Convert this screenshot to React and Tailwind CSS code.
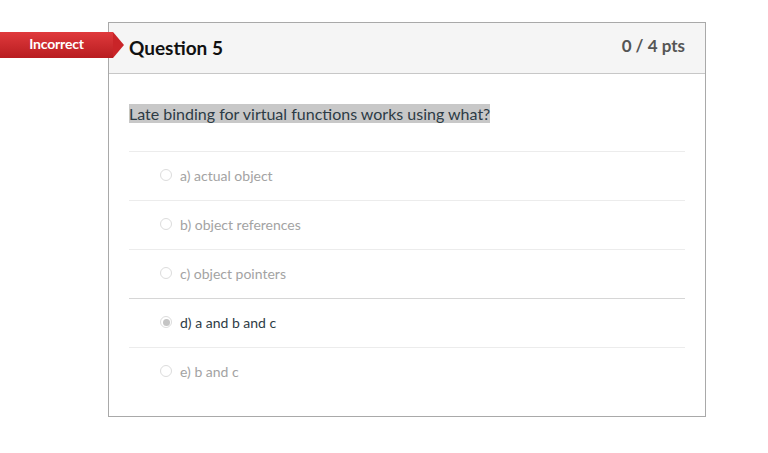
export default function App() {
  const options = [
    { id: "a", label: "a) actual object" },
    { id: "b", label: "b) object references" },
    { id: "c", label: "c) object pointers" },
    { id: "d", label: "d) a and b and c", selected: true },
    { id: "e", label: "e) b and c" },
  ];

  return (
    <div className="w-[768px] h-[453px] bg-white relative font-['Lato','Liberation_Sans',sans-serif] pt-[22px]">
      {/* Incorrect banner */}
      <div className="absolute left-0 top-[32px] h-[26px] w-[124px] flex items-center">
        <div className="h-full w-[113px] bg-gradient-to-b from-[#e0393c] to-[#b81c20] flex items-center justify-center pb-[2px]">
          <span className="text-white text-[14px] font-bold leading-none tracking-[-0.2px]">Incorrect</span>
        </div>
        <div className="h-0 w-0 border-y-[13px] border-y-transparent border-l-[11px] border-l-[#c92428]"></div>
      </div>

      <div className="ml-[108px] w-[598px] border border-[#a9a9a9]">
        <div className="h-[51px] bg-[#f5f5f5] border-b border-[#c7c7c7] flex items-center justify-between px-5">
          <h2 className="text-[19px] font-bold text-[#111] pt-[1px]">Question 5</h2>
          <span className="text-[17px] font-bold text-[#555] mb-[5px]">0 / 4 pts</span>
        </div>
        <div className="px-5 pt-[29px] pb-[20px]">
          <p className="text-[16px] leading-[22px] text-[#2d3b45] mb-[26px]">
            <span className="bg-[#c8c8c8]">Late binding for virtual functions works using what?</span>
          </p>
          <div>
            {options.map((o) => (
              <div
                key={o.id}
                className={`h-[49px] border-t flex items-center pl-[31px] pb-[2px] ${o.id === "d" ? "border-[#d6d6d6]" : "border-[#ececec]"}`}
              >
                <span className="w-[12px] h-[12px] rounded-full border border-[#dcdcdc] bg-white flex items-center justify-center mr-[8px]">
                  {o.selected && <span className="w-[7px] h-[7px] rounded-full bg-[#c4c4c4]"></span>}
                </span>
                <span className={`text-[14px] ${o.selected ? "text-[#2d3b45]" : "text-[#a3a3a3]"}`}>{o.label}</span>
              </div>
            ))}
          </div>
        </div>
      </div>
    </div>
  );
}
